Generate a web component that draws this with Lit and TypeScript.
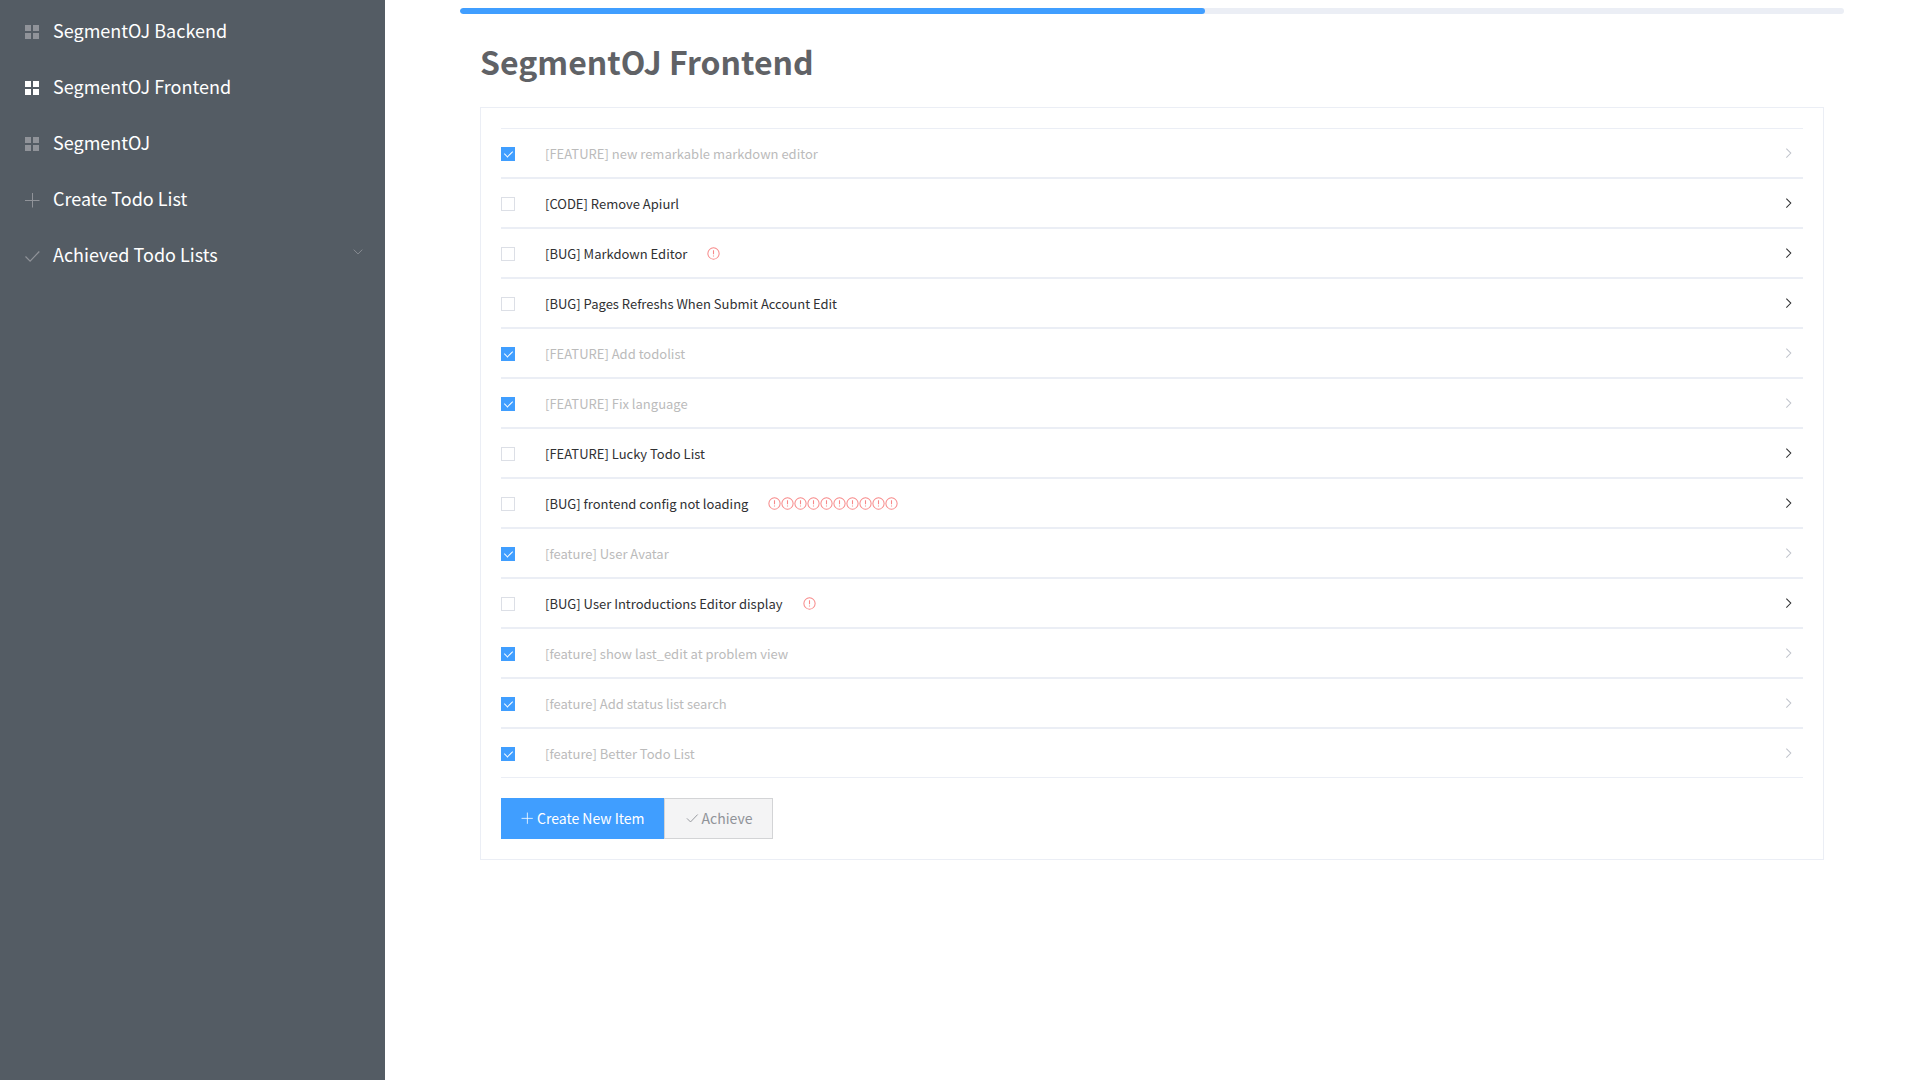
import { LitElement, html, css, svg, nothing } from "lit";
import { customElement, property, state } from "lit/decorators.js";
import { classMap } from "lit/directives/class-map.js";

interface TodoItem {
  title: string;
  done: boolean;
  urgency: number;
}

type IconName = "menu" | "plus" | "check" | "down" | "right" | "warning";

const shapes = {
  menu: svg`<path fill="currentColor" d="M2 2h6v6H2zM10 2h6v6h-6zM2 10h6v6H2zM10 10h6v6h-6z"/>`,
  plus: svg`<path d="M2 9.5h14.5M9.5 2v14.5" fill="none" stroke="currentColor"/>`,
  check: svg`<path d="M2.5 9.5l4.6 4.6L16.3 4.5" fill="none" stroke="currentColor" stroke-width="1.2"/>`,
  down: svg`<path d="M3.5 6l5.5 5.5L14.5 6" fill="none" stroke="currentColor" stroke-width="1.1"/>`,
  right: svg`<path d="M6 2.2l6.2 6.2L6 14.6" fill="none" stroke="currentColor" stroke-width="1.4"/>`,
  warning: svg`<circle cx="9" cy="9" r="7.8" fill="none" stroke="currentColor" stroke-width="1.4"/><path d="M9 4.6v5.6M9 11.7v1.6" fill="none" stroke="currentColor" stroke-width="1.5"/>`,
};

@customElement("todo-icon")
class TodoIcon extends LitElement {
  @property() name: IconName = "menu";

  static styles = css`
    :host { display: block; flex: none; width: 18px; height: 18px; }
    svg { display: block; width: 100%; height: 100%; }
  `;

  render() {
    return html`<svg viewBox="0 0 18 18" aria-hidden="true">${shapes[this.name]}</svg>`;
  }
}

@customElement("todo-sidebar")
class TodoSidebar extends LitElement {
  @property() active = "";

  static styles = css`
    :host { display: block; background: #545c64; }
    .menu { display: flex; flex-direction: column; margin: 0; padding: 4px 0 0; list-style: none; }
    .entry {
      display: flex; align-items: center; gap: 12px; box-sizing: border-box;
      width: 100%; height: 56px; padding: 0 20px 0 23px; border: 0; background: none;
      color: #fff; font: inherit; font-size: 18px; line-height: 52px;
      text-align: left; text-decoration: none; white-space: nowrap; cursor: pointer;
    }
    .icon { color: #909399; }
    .entry.active .icon { color: #fff; }
    .label { flex: 1; padding-bottom: 4px; }
    .arrow { width: 14px; height: 14px; padding-bottom: 8px; color: #909399; }
  `;

  private link(label: string, icon: IconName) {
    const active = label === this.active;
    return html`<li>
      <a class=${classMap({ entry: true, active })} href="#" aria-current=${active ? "page" : nothing}>
        <todo-icon class="icon" name=${icon}></todo-icon><span class="label">${label}</span>
      </a>
    </li>`;
  }

  render() {
    return html`<nav>
      <ul class="menu">
        ${this.link("SegmentOJ Backend", "menu")}
        ${this.link("SegmentOJ Frontend", "menu")}
        ${this.link("SegmentOJ", "menu")}
        ${this.link("Create Todo List", "plus")}
        <li>
          <button class="entry" type="button" aria-expanded="false">
            <todo-icon class="icon" name="check"></todo-icon>
            <span class="label">Achieved Todo Lists</span>
            <todo-icon class="arrow" name="down"></todo-icon>
          </button>
        </li>
      </ul>
    </nav>`;
  }
}

@customElement("todo-row")
class TodoRow extends LitElement {
  @property({ attribute: false }) item!: TodoItem;

  static styles = css`
    :host { display: block; border-top: 1px solid #ebeef5; border-bottom: 1px solid #ebeef5; }
    .row { display: flex; align-items: center; gap: 30px; height: 47px; padding-top: 1px; color: #303133; }
    .row.done { color: #c0c4cc; }
    .row.done .title { color: #bbb; }
    .box {
      appearance: none; box-sizing: border-box; flex: none; width: 14px; height: 14px;
      margin: 0; border: 1px solid #dcdfe6; background: #fff; cursor: pointer;
    }
    .box:checked { border-color: #409eff; background: #409eff; }
    .box:checked::after {
      content: ""; display: block; box-sizing: border-box; width: 5px; height: 8px;
      margin: 1px 0 0 4px; border: solid #fff; border-width: 0 1px 1px 0; transform: rotate(45deg);
    }
    .toggle {
      display: flex; flex: 1; align-items: center; height: 46px; padding: 0 8px 0 0;
      border: 0; background: none; color: inherit; font: inherit; font-size: 13px;
      line-height: 20px; text-align: left; cursor: pointer;
    }
    .urgency { display: flex; flex: 1; padding-left: 20px; color: #f78989; }
    .mark { width: 13px; height: 13px; }
    .arrow { width: 13px; height: 13px; }
  `;

  render() {
    const { title, done, urgency } = this.item;
    return html`<div class=${classMap({ row: true, done })}>
      <input class="box" type="checkbox" .checked=${done} aria-labelledby="title" />
      <button class="toggle" type="button" aria-expanded="false">
        <span class="title" id="title">${title}</span>
        <span class="urgency">
          ${Array.from({ length: urgency }, () => html`<todo-icon class="mark" name="warning"></todo-icon>`)}
        </span>
        <todo-icon class="arrow" name="right"></todo-icon>
      </button>
    </div>`;
  }
}

@customElement("app-root")
class AppRoot extends LitElement {
  @state() private items: TodoItem[] = [
    { title: "[FEATURE] new remarkable markdown editor", done: true, urgency: 0 },
    { title: "[CODE] Remove Apiurl", done: false, urgency: 0 },
    { title: "[BUG] Markdown Editor", done: false, urgency: 1 },
    { title: "[BUG] Pages Refreshs When Submit Account Edit", done: false, urgency: 0 },
    { title: "[FEATURE] Add todolist", done: true, urgency: 0 },
    { title: "[FEATURE] Fix language", done: true, urgency: 0 },
    { title: "[FEATURE] Lucky Todo List", done: false, urgency: 0 },
    { title: "[BUG] frontend config not loading", done: false, urgency: 10 },
    { title: "[feature] User Avatar", done: true, urgency: 0 },
    { title: "[BUG] User Introductions Editor display", done: false, urgency: 1 },
    { title: "[feature] show last_edit at problem view", done: true, urgency: 0 },
    { title: "[feature] Add status list search", done: true, urgency: 0 },
    { title: "[feature] Better Todo List", done: true, urgency: 0 },
  ];

  static styles = css`
    :host {
      display: grid; grid-template-columns: 385px minmax(0, 1fr); min-height: 100vh;
      background: #fff; color: #606266;
      font-family: "Noto Sans CJK SC", "Noto Sans", sans-serif;
    }
    .main { padding: 8px 76px 40px 75px; }
    .progress { height: 6px; border-radius: 3px; background: #ebeef5; overflow: hidden; }
    .bar { height: 6px; border-radius: 3px; background: #409eff; }
    .content { padding: 0 20px; }
    .heading { margin: 23px 0 22px; font-size: 32px; line-height: 48px; font-weight: 700; }
    .card { padding: 20px; border: 1px solid #ebeef5; }
    .actions { display: flex; margin-top: 20px; }
    .action {
      display: flex; align-items: center; gap: 3px; height: 41px; padding: 0 18px 2px;
      border: 1px solid #409eff; background: #409eff; color: #fff;
      font: inherit; font-size: 14px; font-weight: 400; line-height: 20px; cursor: pointer;
    }
    .action.plain {
      padding: 0 20px 2px; border-color: #d3d4d6; background: #f4f4f5; color: #909399;
    }
    .glyph { width: 14px; height: 14px; }
  `;

  render() {
    const percent = (this.items.filter((i) => i.done).length / this.items.length) * 100;
    return html`
      <todo-sidebar active="SegmentOJ Frontend"></todo-sidebar>
      <main class="main">
        <div class="progress" role="progressbar" aria-label="Completed" aria-valuenow=${Math.round(percent)}>
          <div class="bar" style="width: ${percent}%"></div>
        </div>
        <div class="content">
          <h1 class="heading">SegmentOJ Frontend</h1>
          <section class="card">
            ${this.items.map((item) => html`<todo-row .item=${item}></todo-row>`)}
            <div class="actions">
              <button class="action" type="button">
                <todo-icon class="glyph" name="plus"></todo-icon><span>Create New Item</span>
              </button>
              <button class="action plain" type="button">
                <todo-icon class="glyph" name="check"></todo-icon><span>Achieve</span>
              </button>
            </div>
          </section>
        </div>
      </main>
    `;
  }
}
